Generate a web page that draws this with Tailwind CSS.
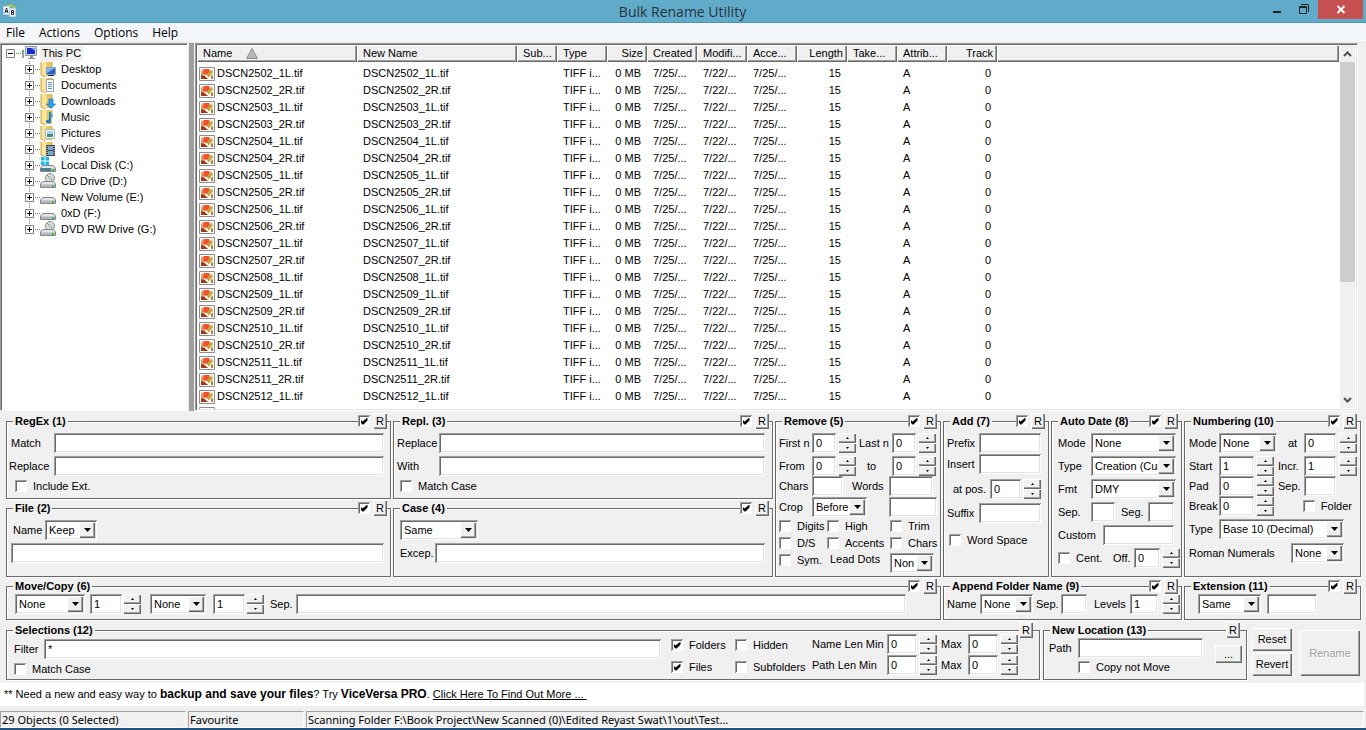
<!DOCTYPE html>
<html lang="en">
  <head>
    <meta charset="UTF-8" />
    <meta name="viewport" content="width=device-width, initial-scale=1.0" />
    <title>Bulk Rename Utility</title>
    <script src="https://cdn.jsdelivr.net/npm/@tailwindcss/browser@4"></script>
  </head>
  <body class="flex h-screen flex-col overflow-hidden bg-[#f0f0f0] font-['Liberation_Sans',Arial,sans-serif] text-[11px] leading-[13px] text-black">
    <!-- Icons -->
    <svg class="hidden">
      <symbol id="folder" viewBox="0 0 16 16">
        <path d="M1 1h6l1 1v13l-7-1z" fill="#f3d982" />
        <path d="M7 1h5v14H7z" fill="#e8c560" />
        <path d="M2 0l4 2v14l-4-2z" fill="#f8e6a0" />
        <path d="M1 1v13l5 2M12 1v6" fill="none" stroke="#cfa94a" />
      </symbol>
      <symbol id="ico-desktop" viewBox="0 0 16 16">
        <use href="#folder" />
        <path d="M6.500 6.500h9v7h-9z" fill="#2b62c0" stroke="#8fa3bd" />
        <path d="M7 7h8l-8 5z" fill="#7db7f2" />
        <path d="M8 14h6v1H8z" fill="#333" />
      </symbol>
      <symbol id="ico-documents" viewBox="0 0 16 16">
        <use href="#folder" />
        <path d="M6.500 2.500h7v12h-7z" fill="#fff" stroke="#9aa7b8" />
        <path d="M8 5.500h4M8 7.500h4M8 9.500h4M8 11.500h4" stroke="#5b8fd0" />
      </symbol>
      <symbol id="ico-downloads" viewBox="0 0 16 16">
        <use href="#folder" />
        <path d="M9 6h4v5h2.500l-4.500 4.500L6.500 11H9z" fill="#2ea0ea" stroke="#1470b8" stroke-width=".7" />
      </symbol>
      <symbol id="ico-music" viewBox="0 0 16 16">
        <use href="#folder" />
        <path d="M10 3v9" stroke="#1c7fd0" stroke-width="2" />
        <path d="M10 2c0 3 4 3 3 8c0-3-2-3-3-4z" fill="#2ea0ea" />
        <ellipse cx="8.500" cy="12.500" rx="2.500" ry="2" fill="#1c7fd0" />
      </symbol>
      <symbol id="ico-pictures" viewBox="0 0 16 16">
        <use href="#folder" />
        <path d="M5.500 4.500h9v9h-9z" fill="#fff" stroke="#a8b0b8" />
        <path d="M7 6h6v3H7z" fill="#9fd4ee" />
        <path d="M7 9h6v3H7z" fill="#3d8f8a" />
      </symbol>
      <symbol id="ico-videos" viewBox="0 0 16 16">
        <use href="#folder" />
        <path d="M6 4h9v11H6z" fill="#3b4654" />
        <path d="M8 5h5v4H8zM8 10h5v4H8z" fill="#7fa6c9" />
        <path d="M7 5v10M14 5v10" stroke="#dfe6ee" stroke-dasharray="1 1" />
      </symbol>
      <symbol id="drive" viewBox="0 0 16 16">
        <path d="M2.500 8.500h11l2 2.500v3.500h-15V11z" fill="#e4e4e8" stroke="#84848a" />
        <path d="M1 11.500h14v2.500H1z" fill="#b4b6bc" />
        <path d="M12 12h2v2h-2z" fill="#2fc72f" />
      </symbol>
      <symbol id="ico-system" viewBox="0 0 16 16">
        <use href="#drive" />
        <path d="M1 11h10v3H1z" fill="#4a8296" />
        <path d="M1 0h3.500v3.500H1zM5.500 0H9v3.500H5.500zM1 4.500h3.500V8H1zM5.500 4.500H9V8H5.500z" fill="#10b8f5" />
      </symbol>
      <symbol id="ico-disc" viewBox="0 0 16 16">
        <circle cx="10" cy="5" r="4.500" fill="#dcdfe0" stroke="#8a8d90" />
        <path d="M10 5l-3-3M10 5l3 3" stroke="#7fae7a" />
        <circle cx="10" cy="5" r="1.300" fill="#fff" stroke="#888" stroke-width=".6" />
        <use href="#drive" />
      </symbol>
      <symbol id="ico-drive" viewBox="0 0 16 16"><use href="#drive" /></symbol>
      <symbol id="ico-pc" viewBox="0 0 16 16">
        <path d="M1 5h2v8H1z" fill="#9a9da2" />
        <path d="M1 5h2v2H1z" fill="#38c738" />
        <path d="M4.500 1.500h11v9h-11z" fill="#d2d8e2" stroke="#9098a4" />
        <path d="M6 3h8v6H6z" fill="#1430c8" />
        <path d="M10 3h4v3z" fill="#7aa0f5" />
        <path d="M9 11h3v2h2v1H7v-1h2z" fill="#8a8f98" />
      </symbol>
      <symbol id="ico-tif" viewBox="0 0 16 14">
        <path d="M.5 .5h15v13H.5z" fill="#fff" stroke="#8d8d8d" />
        <path d="M2 2h12v10H2z" fill="#f1e4d2" />
        <path d="M2 4l3-2v7l-3-1z" fill="#d9a06c" />
        <path d="M5 2h5l1 3-3 3-4-1z" fill="#f4512a" />
        <path d="M10 5l2-2 2 2-4 5-3-1z" fill="#c2a53c" />
        <path d="M2 8l4 1 3 3H2z" fill="#9c3a1c" />
        <path d="M6 9l2-1 1 2-1 1zM10 10h2v2h-2z" fill="#fff" />
        <path d="M12 9l2-1v4h-2z" fill="#a8853f" />
      </symbol>
    </svg>

    <!-- Title bar -->
    <header class="flex h-[23px] shrink-0 items-start border-b border-[#4a95b2] bg-[#60aaca]">
      <div class="flex flex-1 pt-[3px] pl-[2px]">
        <svg class="size-4" viewBox="0 0 16 16">
          <path d="M2 4c3-4 8-4 11-1l1-1v4h-4l1-1C8 3 5 3 3 5z" fill="#9cc98a" stroke="#5f8f57" stroke-width=".5" />
          <path d="M1.500 3.500h6v8h-6z" fill="#eef2fa" stroke="#c3cfe2" />
          <path d="M7.500 5.500h6v8h-6z" fill="#eef2fa" stroke="#c3cfe2" />
          <path d="M3 10l1.500-5L6 10M3.500 8.500h2" fill="none" stroke="#1c2742" />
          <path d="M9.500 7.500h2v4h-2zM9 9.500h3" fill="none" stroke="#1c2742" />
        </svg>
      </div>
      <h1 class="font-['Open_Sans','Noto_Sans',sans-serif] text-[14px] leading-[23px] text-[#27333a]">Bulk Rename Utility</h1>
      <div class="flex flex-1 justify-end pr-[3px]">
        <button aria-label="Minimize" class="h-[19px] w-7">
          <svg class="mx-auto h-[19px] w-7" viewBox="0 0 28 19"><path d="M10 11h8v2h-8z" fill="#222" /></svg>
        </button>
        <button aria-label="Restore" class="h-[19px] w-[27px]">
          <svg class="h-[19px] w-[27px]" viewBox="0 0 27 19"><path d="M8.500 6.500h7v7h-7zM8 7.500h8M10 4.500h7.500V12" fill="none" stroke="#222" /></svg>
        </button>
        <button aria-label="Close" class="h-[19px] w-[45px] bg-[#c75050]">
          <svg class="h-[19px] w-[45px]" viewBox="0 0 45 19"><path d="M19.500 6l7 7M26.500 6l-7 7" stroke="#fff" stroke-width="2" /></svg>
        </button>
      </div>
    </header>

    <nav class="flex h-5 shrink-0 items-center gap-[14px] border-b border-[#e6e8ea] bg-[#f5f6f9] pl-[6px] font-['Open_Sans','Noto_Sans',sans-serif] text-[12px]">
      <button>File</button>
      <button>Actions</button>
      <button>Options</button>
      <button>Help</button>
    </nav>

    <!-- Folder tree and file list -->
    <main class="flex min-h-0 flex-1 pr-[8px]">
      <ul id="tree" class="w-[188px] shrink-0 overflow-hidden border border-[#a0a0a0] border-r-white border-b-white bg-white pt-px pl-px shadow-[inset_1px_1px_#696969]"></ul>
      <div class="mx-px w-[5px] shrink-0 bg-[#a0a0a0]"></div>
      <div class="flex min-w-0 flex-1 border border-[#a0a0a0] border-r-white border-b-white bg-white pt-px pl-px shadow-[inset_1px_1px_#696969,inset_-1px_-1px_#e3e3e3]">
        <div class="mb-px min-w-0 flex-1 overflow-hidden">
          <table class="w-full table-fixed border-separate border-spacing-0">
            <thead>
              <tr id="headRow"></tr>
              <tr class="h-[3px]"></tr>
            </thead>
            <tbody id="fileRows"></tbody>
          </table>
        </div>
        <div class="mr-[2px] mb-[2px] ml-px flex w-[15px] shrink-0 flex-col bg-[#f0f0f0]">
          <svg class="h-[17px] w-[15px] shrink-0" viewBox="0 0 15 17"><path d="M4 11l3.500-3.500L11 11" fill="none" stroke="#505050" stroke-width="2" /></svg>
          <div class="h-[220px] bg-[#cdcdcd]"></div>
          <svg class="mt-auto h-[17px] w-[15px] shrink-0" viewBox="0 0 15 17"><path d="M4 7l3.500 3.500L11 7" fill="none" stroke="#505050" stroke-width="2" /></svg>
        </div>
      </div>
    </main>

    <!-- Rename options -->
    <form class="shrink-0 pt-[4px] pr-[5px] pl-[6px]">
      <div class="grid grid-cols-[minmax(0,385fr)_minmax(0,380fr)_166px_106px_131px_177px] gap-x-[2px] gap-y-[3px]">
        <fieldset data-ui="group" data-tools="check">
          <legend>RegEx (1)</legend>
          <div class="flex flex-col gap-[3px] pt-[5px] pr-[6px] pb-[4px] pl-[2px]">
            <div data-ui="row"><label for="reMatch" class="w-[45px] pl-[2px]">Match</label><input id="reMatch" data-ui="edit" class="flex-1" /></div>
            <div data-ui="row"><label for="reRepl" class="w-[45px]">Replace</label><input id="reRepl" data-ui="edit" class="flex-1" /></div>
            <label data-ui="check" class="pl-[6px]"><input type="checkbox" />Include Ext.</label>
          </div>
        </fieldset>

        <fieldset data-ui="group" data-tools="check">
          <legend>Repl. (3)</legend>
          <div class="flex flex-col gap-[3px] pt-[5px] pr-[7px] pb-[4px] pl-[3px]">
            <div data-ui="row"><label for="rpRepl" class="w-[42px]">Replace</label><input id="rpRepl" data-ui="edit" class="flex-1" /></div>
            <div data-ui="row"><label for="rpWith" class="w-[42px]">With</label><input id="rpWith" data-ui="edit" class="flex-1" /></div>
            <label data-ui="check" class="pl-[3px]"><input type="checkbox" />Match Case</label>
          </div>
        </fieldset>

        <fieldset data-ui="group" data-tools="check" class="row-span-2">
          <legend>Remove (5)</legend>
          <div class="flex flex-col pt-[5px] pl-[3px]">
            <div data-ui="row"><label for="rmFirst" class="w-[33px]">First n</label><input id="rmFirst" value="0" data-ui="edit" class="w-6" /><span data-ui="spin" class="ml-[2px]"></span><label for="rmLast" class="ml-[3px] w-[33px]">Last n</label><input id="rmLast" value="0" data-ui="edit" class="w-6" /><span data-ui="spin" class="ml-[2px]"></span></div>
            <div data-ui="row" class="mt-[3px]"><label for="rmFrom" class="w-[33px]">From</label><input id="rmFrom" value="0" data-ui="edit" class="w-6" /><span data-ui="spin" class="ml-[2px]"></span><label for="rmTo" class="ml-[3px] w-[33px] pl-[8px]">to</label><input id="rmTo" value="0" data-ui="edit" class="w-6" /><span data-ui="spin" class="ml-[2px]"></span></div>
            <div data-ui="row"><label for="rmChars" class="w-[33px]">Chars</label><input id="rmChars" data-ui="edit" class="w-[31px]" /><label for="rmWords" class="ml-[9px] w-[37px]">Words</label><input id="rmWords" data-ui="edit" class="w-11" /></div>
            <div data-ui="row" class="mt-px"><label for="rmCrop" class="w-[33px]">Crop</label><span data-ui="combo" class="w-[55px]"><select id="rmCrop"><option>Before</option><option>After</option></select></span><input aria-label="Crop text" data-ui="edit" class="ml-[22px] w-12" /></div>
            <div class="grid grid-cols-[48px_63px_1fr] gap-y-[3px] pt-[2px]">
              <label data-ui="check"><input type="checkbox" />Digits</label>
              <label data-ui="check"><input type="checkbox" />High</label>
              <label data-ui="check"><input type="checkbox" />Trim</label>
              <label data-ui="check"><input type="checkbox" />D/S</label>
              <label data-ui="check"><input type="checkbox" />Accents</label>
              <label data-ui="check"><input type="checkbox" />Chars</label>
              <label data-ui="check"><input type="checkbox" />Sym.</label>
              <label for="rmDots" class="pl-[3px]">Lead Dots</label>
              <span data-ui="combo" class="w-11"><select id="rmDots"><option>Non</option></select></span>
            </div>
          </div>
        </fieldset>

        <fieldset data-ui="group" data-tools="check" class="row-span-2">
          <legend>Add (7)</legend>
          <div class="flex flex-col pt-[5px] pl-[3px]">
            <div data-ui="row"><label for="adPre" class="w-8">Prefix</label><input id="adPre" data-ui="edit" class="w-[62px]" /></div>
            <div data-ui="row" class="mt-px"><label for="adIns" class="w-8">Insert</label><input id="adIns" data-ui="edit" class="w-[62px]" /></div>
            <div data-ui="row" class="mt-[5px]"><label for="adPos" class="w-[43px] pl-[6px]">at pos.</label><input id="adPos" value="0" data-ui="edit" class="w-[31px]" /><span data-ui="spin" class="ml-[2px]"></span></div>
            <div data-ui="row" class="mt-[4px]"><label for="adSuf" class="w-8">Suffix</label><input id="adSuf" data-ui="edit" class="w-[62px]" /></div>
            <label data-ui="check" class="mt-[10px] pl-[2px]"><input type="checkbox" />Word Space</label>
          </div>
        </fieldset>

        <fieldset data-ui="group" data-tools="check" class="row-span-2">
          <legend>Auto Date (8)</legend>
          <div class="flex flex-col gap-[3px] pt-[5px] pl-[6px]">
            <div data-ui="row"><label for="dtMode" class="w-[33px]">Mode</label><span data-ui="combo" class="w-[85px]"><select id="dtMode"><option>None</option></select></span></div>
            <div data-ui="row"><label for="dtType" class="w-[33px]">Type</label><span data-ui="combo" class="w-[85px]"><select id="dtType"><option>Creation (Cur</option></select></span></div>
            <div data-ui="row"><label for="dtFmt" class="w-[33px]">Fmt</label><span data-ui="combo" class="w-[85px]"><select id="dtFmt"><option>DMY</option></select></span></div>
            <div data-ui="row"><label for="dtSep" class="w-[33px]">Sep.</label><input id="dtSep" data-ui="edit" class="w-6" /><label for="dtSeg" class="ml-[6px] w-[27px]">Seg.</label><input id="dtSeg" data-ui="edit" class="w-[26px]" /></div>
            <div data-ui="row"><label for="dtCustom" class="w-[45px]">Custom</label><input id="dtCustom" data-ui="edit" class="w-[71px]" /></div>
            <div data-ui="row"><label data-ui="check"><input type="checkbox" />Cent.</label><label for="dtOff" class="ml-auto w-[21px]">Off.</label><input id="dtOff" value="0" data-ui="edit" class="w-[26px]" /><span data-ui="spin" class="mr-px ml-[2px]"></span></div>
          </div>
        </fieldset>

        <fieldset data-ui="group" data-tools="check" class="row-span-2">
          <legend>Numbering (10)</legend>
          <div class="flex flex-col pt-[5px] pr-[3px] pb-[13px] pl-[4px]">
            <div data-ui="row"><label for="nuMode" class="w-[30px]">Mode</label><span data-ui="combo" class="w-[58px]"><select id="nuMode"><option>None</option></select></span><label for="nuAt" class="ml-[11px] w-4">at</label><input id="nuAt" value="0" data-ui="edit" class="w-8" /><span data-ui="spin" class="ml-auto"></span></div>
            <div data-ui="row" class="mt-[3px]"><label for="nuStart" class="w-[30px]">Start</label><input id="nuStart" value="1" data-ui="edit" class="w-[35px]" /><span data-ui="spin" class="ml-[2px]"></span><label for="nuIncr" class="ml-[4px] w-[26px]">Incr.</label><input id="nuIncr" value="1" data-ui="edit" class="w-8" /><span data-ui="spin" class="ml-auto"></span></div>
            <div data-ui="row"><label for="nuPad" class="w-[30px]">Pad</label><input id="nuPad" value="0" data-ui="edit" class="w-[35px]" /><span data-ui="spin" class="ml-[2px]"></span><label for="nuSep" class="ml-[4px] w-[26px]">Sep.</label><input id="nuSep" data-ui="edit" class="w-8" /></div>
            <div data-ui="row"><label for="nuBreak" class="w-[30px]">Break</label><input id="nuBreak" value="0" data-ui="edit" class="w-[35px]" /><span data-ui="spin" class="ml-[2px]"></span><label data-ui="check" class="ml-auto pr-[5px]"><input type="checkbox" />Folder</label></div>
            <div data-ui="row" class="mt-[3px]"><label for="nuType" class="w-[30px]">Type</label><span data-ui="combo" class="w-[125px]"><select id="nuType"><option>Base 10 (Decimal)</option></select></span></div>
            <div data-ui="row" class="mt-[4px]"><label for="nuRoman" class="w-[102px]">Roman Numerals</label><span data-ui="combo" class="w-[53px]"><select id="nuRoman"><option>None</option></select></span></div>
          </div>
        </fieldset>

        <fieldset data-ui="group" data-tools="check">
          <legend>File (2)</legend>
          <div class="flex flex-col gap-[3px] pt-[5px] pr-[6px] pb-[12px] pl-[4px]">
            <div data-ui="row"><label for="fiName" class="w-[34px] pl-[2px]">Name</label><span data-ui="combo" class="w-[52px]"><select id="fiName"><option>Keep</option></select></span></div>
            <div data-ui="row"><input aria-label="File name" data-ui="edit" class="flex-1" /></div>
          </div>
        </fieldset>

        <fieldset data-ui="group" data-tools="check">
          <legend>Case (4)</legend>
          <div class="flex flex-col gap-[3px] pt-[5px] pr-[7px] pb-[12px] pl-[6px]">
            <div data-ui="row"><span data-ui="combo" class="w-[78px]"><select aria-label="Case"><option>Same</option></select></span></div>
            <div data-ui="row"><label for="caExc" class="w-[35px]">Excep.</label><input id="caExc" data-ui="edit" class="flex-1" /></div>
          </div>
        </fieldset>

        <fieldset data-ui="group" data-tools="check" class="col-span-3">
          <legend>Move/Copy (6)</legend>
          <div class="pt-px pr-[34px] pb-[5px] pl-[8px]">
            <div data-ui="row">
              <span data-ui="combo" class="w-[70px]"><select aria-label="Move mode"><option>None</option></select></span>
              <input aria-label="Move count" value="1" data-ui="edit" class="ml-[5px] w-8" /><span data-ui="spin" class="ml-px"></span>
              <span data-ui="combo" class="ml-[9px] w-14"><select aria-label="Copy mode"><option>None</option></select></span>
              <input aria-label="Copy count" value="1" data-ui="edit" class="ml-[7px] w-8" /><span data-ui="spin" class="ml-px"></span>
              <label for="mvSep" class="ml-[6px] w-[26px]">Sep.</label><input id="mvSep" data-ui="edit" class="flex-1" />
            </div>
          </div>
        </fieldset>

        <fieldset data-ui="group" data-tools="check" class="col-span-2">
          <legend>Append Folder Name (9)</legend>
          <div class="pt-px pr-px pb-[5px] pl-[3px]">
            <div data-ui="row">
              <label for="apName" class="w-[33px]">Name</label><span data-ui="combo" class="w-[53px]"><select id="apName"><option>None</option></select></span>
              <label for="apSep" class="ml-[3px] w-[25px]">Sep.</label><input id="apSep" data-ui="edit" class="w-[26px]" />
              <label for="apLev" class="ml-[7px] w-9">Levels</label><input id="apLev" value="1" data-ui="edit" class="w-7" /><span data-ui="spin" class="ml-auto"></span>
            </div>
          </div>
        </fieldset>

        <fieldset data-ui="group" data-tools="check">
          <legend>Extension (11)</legend>
          <div class="pt-px pb-[5px] pl-[13px]">
            <div data-ui="row">
              <span data-ui="combo" class="w-[63px]"><select aria-label="Extension mode"><option>Same</option></select></span>
              <input aria-label="Extension" data-ui="edit" class="ml-[6px] w-[50px]" />
            </div>
          </div>
        </fieldset>
      </div>

      <div class="mt-[4px] flex items-stretch pr-px">
        <fieldset data-ui="group" data-tools="reset" class="flex-1">
          <legend>Selections (12)</legend>
          <div class="flex pr-[21px] pb-[3px]">
            <div class="flex flex-1 flex-col gap-[3px] pt-[2px] pl-[7px]">
              <div data-ui="row"><label for="seFilter" class="w-[30px]">Filter</label><input id="seFilter" value="*" data-ui="edit" class="flex-1" /></div>
              <label data-ui="check"><input type="checkbox" />Match Case</label>
            </div>
            <div class="ml-[10px] grid grid-cols-[64px_77px] gap-y-[6px] pt-px">
              <label data-ui="check"><input type="checkbox" checked />Folders</label>
              <label data-ui="check"><input type="checkbox" />Hidden</label>
              <label data-ui="check"><input type="checkbox" checked />Files</label>
              <label data-ui="check"><input type="checkbox" />Subfolders</label>
            </div>
            <div class="-mt-[3px] flex flex-col gap-px">
              <div data-ui="row"><label for="seNMin" class="w-[75px]">Name Len Min</label><input id="seNMin" value="0" data-ui="edit" class="w-[30px]" /><span data-ui="spin" class="ml-[2px]"></span><label for="seNMax" class="ml-[4px] w-[27px]">Max</label><input id="seNMax" value="0" data-ui="edit" class="w-[30px]" /><span data-ui="spin" class="ml-[2px]"></span></div>
              <div data-ui="row"><label for="sePMin" class="w-[75px]">Path Len Min</label><input id="sePMin" value="0" data-ui="edit" class="w-[30px]" /><span data-ui="spin" class="ml-[2px]"></span><label for="sePMax" class="ml-[4px] w-[27px]">Max</label><input id="sePMax" value="0" data-ui="edit" class="w-[30px]" /><span data-ui="spin" class="ml-[2px]"></span></div>
            </div>
          </div>
        </fieldset>

        <fieldset data-ui="group" data-tools="reset" class="ml-[3px] w-[204px]">
          <legend>New Location (13)</legend>
          <div class="flex items-start pr-[4px] pl-[5px]">
            <div class="flex flex-col gap-[2px] pt-px">
              <div data-ui="row"><label for="nlPath" class="w-[29px]">Path</label><input id="nlPath" data-ui="edit" class="w-[125px]" /></div>
              <label data-ui="check" class="pl-[29px]"><input type="checkbox" />Copy not Move</label>
            </div>
            <button type="button" data-ui="button" aria-label="Browse" class="mt-[8px] ml-auto h-[18px] w-[27px]">...</button>
          </div>
        </fieldset>

        <div class="ml-[5px] flex w-10 flex-col gap-[2px] pt-[4px]">
          <button type="reset" data-ui="button" class="h-[23px]">Reset</button>
          <button type="button" data-ui="button" class="h-[23px]">Revert</button>
        </div>
        <button type="button" disabled data-ui="button" class="mt-[6px] ml-[8px] h-[46px] w-[60px] text-[#a0a0a0] text-shadow-[1px_1px_#fff]">Rename</button>
      </div>
    </form>

    <p class="mt-[3px] mr-[2px] shrink-0 bg-white py-[5px] pl-[4px]">
      ** Need a new and easy way to <b class="text-[12px]">backup and save your files</b>? Try <b class="text-[12px]">ViceVersa PRO</b>. <a href="#" class="underline">Click Here To Find Out More ...&nbsp;</a>
    </p>

    <!-- Status bar -->
    <footer class="mt-[5px] flex shrink-0 gap-[2px] border-b-2 border-[#24507a] pr-[2px] font-['Noto_Sans','Open_Sans',sans-serif] text-[11px] leading-[15px]">
      <div class="w-[186px] border border-[#a0a0a0] border-r-white border-b-white pl-px">29 Objects (0 Selected)</div>
      <div class="w-[116px] border border-[#a0a0a0] border-r-white border-b-white pl-px">Favourite</div>
      <div class="flex-1 border border-[#a0a0a0] border-r-white border-b-white pl-px">Scanning Folder F:\Book Project\New Scanned (0)\Edited Reyast Swat\1\out\Test...</div>
    </footer>

    <script>
      // Shared looks for the form controls, picked by data-ui
      const looks = {
        group: "relative min-w-0 border border-[#696969] shadow-[inset_1px_1px_#fff,1px_1px_#fff]",
        row: "flex h-5 items-center",
        edit: "h-5 min-w-0 bg-white pl-[4px] shadow-[inset_1px_1px_#a0a0a0,inset_-1px_-1px_#fff,inset_2px_2px_#696969,inset_-2px_-2px_#e3e3e3] outline-none",
        combo: "relative block h-5 shrink-0",
        spin: "flex h-5 w-[18px] shrink-0 flex-col",
        check: "flex h-[14px] items-center gap-[6px] whitespace-nowrap",
        button: "bg-[#f0f0f0] shadow-[inset_1px_1px_#fff,inset_-1px_-1px_#696969,inset_-2px_-2px_#a0a0a0]",
      };
      const legendLook = "ml-[6px] bg-[#f0f0f0] px-[2px] font-bold";
      const boxLook =
        "grid size-3 shrink-0 appearance-none place-items-center bg-white shadow-[inset_1px_1px_#a0a0a0,inset_-1px_-1px_#fff,inset_2px_2px_#696969] before:hidden before:size-[7px] before:bg-black before:content-[''] before:[clip-path:polygon(0_2px,2px_4px,7px_0,7px_3px,3px_7px,2px_7px,0_5px)] checked:before:block";
      const selectLook =
        "size-full appearance-none overflow-hidden bg-white pr-[16px] pl-[4px] shadow-[inset_1px_1px_#a0a0a0,inset_-1px_-1px_#fff,inset_2px_2px_#696969,inset_-2px_-2px_#e3e3e3] outline-none";

      const addLook = (el, look) => el.classList.add(...look.split(" "));

      document.querySelectorAll("[data-ui]").forEach((el) => addLook(el, looks[el.dataset.ui]));

      document.querySelectorAll("[data-ui=combo]").forEach((el) => {
        addLook(el.querySelector("select"), selectLook);
        el.insertAdjacentHTML(
          "beforeend",
          `<span class="pointer-events-none absolute top-[2px] right-[2px] grid h-4 w-4 place-items-center bg-[#f0f0f0] shadow-[inset_1px_1px_#fff,inset_-1px_-1px_#696969,inset_-2px_-2px_#a0a0a0]">
            <svg class="h-[4px] w-[7px]" viewBox="0 0 7 4"><path d="M0 0h7L3.500 4z" /></svg>
          </span>`
        );
      });

      document.querySelectorAll("[data-ui=spin]").forEach((el) => {
        const half = "grid h-[10px] place-items-center bg-[#f0f0f0] shadow-[inset_1px_1px_#fff,inset_-1px_-1px_#696969,inset_-2px_-2px_#a0a0a0]";
        el.innerHTML = `
          <button type="button" aria-label="Up" class="${half}"><svg class="h-[2px] w-[3px]" viewBox="0 0 3 2"><path d="M0 2h3L1.500 0z" /></svg></button>
          <button type="button" aria-label="Down" class="${half}"><svg class="h-[2px] w-[3px]" viewBox="0 0 3 2"><path d="M0 0h3L1.500 2z" /></svg></button>`;
      });

      // Enable box and reset button on each group's top edge
      document.querySelectorAll("fieldset").forEach((el) => {
        const legend = el.querySelector("legend");
        addLook(legend, legendLook);
        const hasBox = el.dataset.tools === "check";
        const box = hasBox ? `<input type="checkbox" checked aria-label="Enable ${legend.textContent}" />` : "";
        el.insertAdjacentHTML(
          "beforeend",
          `<div class="absolute -top-[15px] ${hasBox ? "right-[3px]" : "right-[6px]"} flex items-center gap-[3px] bg-[#f0f0f0]">
            ${box}
            <button type="button" aria-label="Reset ${legend.textContent}" class="h-4 w-[14px] bg-[#f0f0f0] shadow-[inset_1px_1px_#fff,inset_-1px_-1px_#696969,inset_-2px_-2px_#a0a0a0]">R</button>
          </div>`
        );
      });

      document.querySelectorAll("input[type=checkbox]").forEach((el) => addLook(el, boxLook));

      // Folder tree
      const folders = [
        ["Desktop", "desktop"],
        ["Documents", "documents"],
        ["Downloads", "downloads"],
        ["Music", "music"],
        ["Pictures", "pictures"],
        ["Videos", "videos"],
        ["Local Disk (C:)", "system"],
        ["CD Drive (D:)", "disc"],
        ["New Volume (E:)", "drive"],
        ["0xD (F:)", "drive"],
        ["DVD RW Drive (G:)", "disc"],
      ];
      document.getElementById("tree").innerHTML =
        `<li class="flex h-4 items-center">
          <svg class="h-4 w-[19px]" viewBox="0 0 19 16">
            <path d="M4.500 4.500h8v8h-8z" fill="#fff" stroke="#808080" />
            <path d="M6 8.500h5" stroke="#000" />
            <path d="M14 8.500h5" stroke="#808080" stroke-dasharray="1 1" />
          </svg>
          <svg class="size-4"><use href="#ico-pc" /></svg>
          <span class="ml-[3px] bg-[#f0f0f0] px-[2px] leading-[15px]">This PC</span>
        </li>` +
        folders
          .map(
            ([name, icon], i) => `
        <li class="flex h-4 items-center">
          <svg class="h-4 w-[38px]" viewBox="0 0 38 16">
            <path d="${i < folders.length - 1 ? "M27.500 0v16" : "M27.500 0v8"}" stroke="#808080" stroke-dasharray="1 1" />
            <path d="M33 8.500h5" stroke="#808080" stroke-dasharray="1 1" />
            <path d="M23.500 4.500h8v8h-8z" fill="#fff" stroke="#808080" />
            <path d="M25 8.500h5M27.500 6v5" stroke="#000" />
          </svg>
          <svg class="size-4"><use href="#ico-${icon}" /></svg>
          <span class="ml-[5px]">${name}</span>
        </li>`
          )
          .join("");

      // File list
      const columns = [
        ["Name", "w-[160px]"],
        ["New Name", "w-[160px]"],
        ["Sub...", "w-[40px]"],
        ["Type", "w-[50px]"],
        ["Size", "w-[40px] text-right"],
        ["Created", "w-[50px]"],
        ["Modifi...", "w-[50px]"],
        ["Acce...", "w-[50px]"],
        ["Length", "w-[50px] text-right"],
        ["Take...", "w-[50px]"],
        ["Attrib...", "w-[50px]"],
        ["Track", "w-[50px] text-right"],
        ["", ""],
      ];
      const sortArrow = `<svg class="ml-[14px] inline h-[11px] w-3 align-[-2px]" viewBox="0 0 12 11"><path d="M6 .5L.5 10.500h11z" fill="#b8b8b8" stroke="#8c8c8c" /></svg>`;
      document.getElementById("headRow").innerHTML = columns
        .map(
          ([text, size], i) =>
            `<th class="h-[17px] overflow-hidden bg-[#f0f0f0] p-0 pr-[4px] pl-[6px] text-left leading-[17px] font-normal whitespace-nowrap shadow-[inset_1px_1px_#fff,inset_-1px_-1px_#696969,inset_-2px_-2px_#a0a0a0] ${size}">${text}${i === 0 ? sortArrow : ""}</th>`
        )
        .join("");

      const files = [];
      for (let n = 2502; n <= 2512; n++) {
        files.push(`DSCN${n}_1L.tif`);
        if (n !== 2508) files.push(`DSCN${n}_2R.tif`);
      }
      document.getElementById("fileRows").innerHTML = files
        .map(
          (name) => `
        <tr class="h-[17px] whitespace-nowrap">
          <td class="p-0 pl-[2px]"><div class="flex items-center gap-[2px]"><svg class="h-[14px] w-4"><use href="#ico-tif" /></svg>${name}</div></td>
          <td class="p-0 pl-[6px]">${name}</td>
          <td></td>
          <td class="p-0 pl-[6px]">TIFF i...</td>
          <td class="p-0 pr-[6px] text-right">0 MB</td>
          <td class="p-0 pl-[6px]">7/25/...</td>
          <td class="p-0 pl-[6px]">7/22/...</td>
          <td class="p-0 pl-[6px]">7/25/...</td>
          <td class="p-0 pr-[6px] text-right">15</td>
          <td></td>
          <td class="p-0 pl-[6px]">A</td>
          <td class="p-0 pr-[6px] text-right">0</td>
          <td></td>
        </tr>`
        )
        .join("");
    </script>
  </body>
</html>
